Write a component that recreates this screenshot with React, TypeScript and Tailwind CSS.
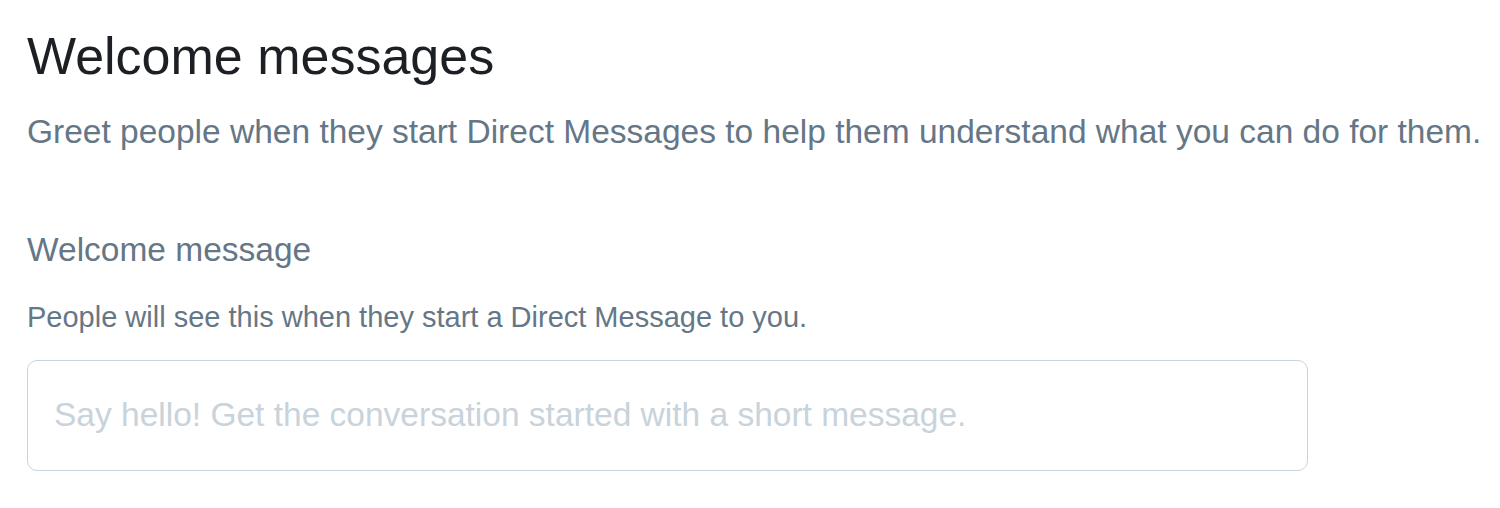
import React from 'react';

const App: React.FC = () => {
  return (
    <div className="min-h-[508px] w-full bg-white pl-[27px] pt-[26px] font-['Liberation_Sans',Arial,sans-serif]">
      <h1 className="text-[52px] leading-[60px] font-normal text-[#1c2024]">Welcome messages</h1>
      <p className="mt-[26px] text-[33.5px] leading-[40px] text-[#657786]">
        Greet people when they start Direct Messages to help them understand what you can do for them.
      </p>

      <div className="mt-[78px]">
        <h2 className="text-[33.5px] leading-[40px] font-normal text-[#657786]">Welcome message</h2>
        <p className="mt-[29px] text-[29px] leading-[36px] text-[#657786]">
          People will see this when they start a Direct Message to you.
        </p>
        <input
          type="text"
          placeholder="Say hello! Get the conversation started with a short message."
          className="mt-[25px] block h-[111px] w-[1281px] rounded-[10px] border border-[#c9d4dc] bg-white pl-[26px] pb-[2px] text-[33.5px] text-[#14171a] outline-none placeholder:text-[#c8d3db]"
        />
      </div>
    </div>
  );
};

export default App;
